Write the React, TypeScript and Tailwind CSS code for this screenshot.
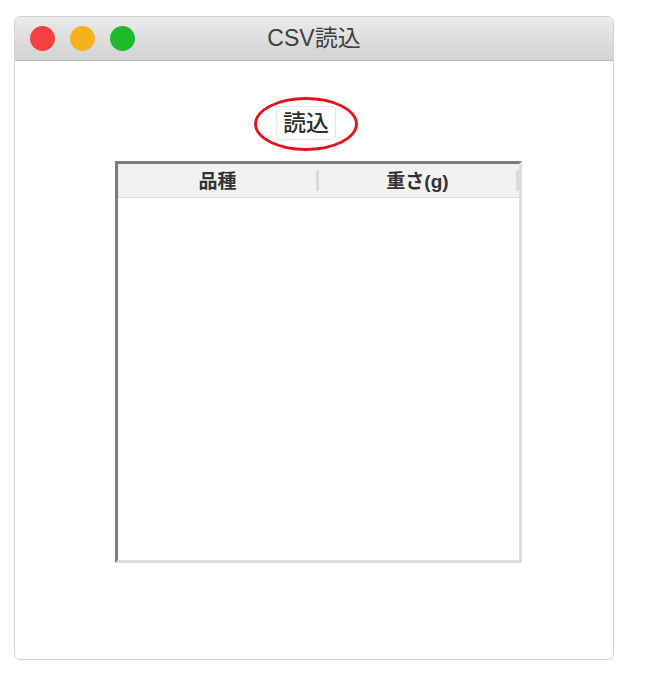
const jp = "font-['Liberation_Sans','Noto_Sans_CJK_JP',sans-serif]";

export default function App() {
  return (
    <div className={`w-[650px] h-[688px] bg-white pt-[16px] pl-[14px] ${jp}`}>
      <div className="w-[600px] h-[644px] rounded-[6px] border border-[#d2d2d2] bg-white overflow-hidden flex flex-col">
        {/* title bar */}
        <div className="relative h-[44px] shrink-0 bg-gradient-to-b from-[#ebebeb] to-[#d2d2d2] border-b border-[#b9b9b9] flex items-center">
          <div className="flex gap-[15px] pl-[15px]">
            <span className="w-[25px] h-[25px] rounded-full bg-[#f4413f]" />
            <span className="w-[25px] h-[25px] rounded-full bg-[#f6b11f]" />
            <span className="w-[25px] h-[25px] rounded-full bg-[#1dbb2c]" />
          </div>
          <p className="absolute inset-0 flex items-center justify-center text-[23px] text-[#3e3e3e] pb-[1px]">
            CSV読込
          </p>
        </div>

        {/* content */}
        <div className="flex flex-col items-start">
          <div className="relative mt-[45px] ml-[261px]">
            <button className="h-[34px] px-[6px] rounded-[3px] border border-[#e6e6e6] bg-white text-[23px] font-medium text-[#2f2f2f] leading-none">
              読込
            </button>
            <div className="absolute left-[-22px] top-[-9px] w-[104px] h-[54px] rounded-[50%] border-[3px] border-[#e3141c]" />
          </div>

          <div className="mt-[21px] ml-[100px] w-[407px] h-[402px] border-[3px] border-t-[#7d7d7d] border-l-[#7d7d7d] border-r-[#dedede] border-b-[#dedede] bg-white">
            <div className="h-[34px] flex bg-[#f2f2f2] border-b border-[#dcdcdc] border-l border-l-[#e4e4e4]">
              <div className="flex-1 flex items-center justify-center text-[19px] font-bold text-[#333] border-r-[3px] border-[#dadada] my-[6px] pt-[3px]">
                品種
              </div>
              <div className="flex-1 flex items-center justify-center text-[19px] font-bold text-[#333] border-r-[3px] border-[#dadada] my-[6px] pt-[3px]">
                重さ(g)
              </div>
            </div>
          </div>
        </div>
      </div>
    </div>
  );
}
